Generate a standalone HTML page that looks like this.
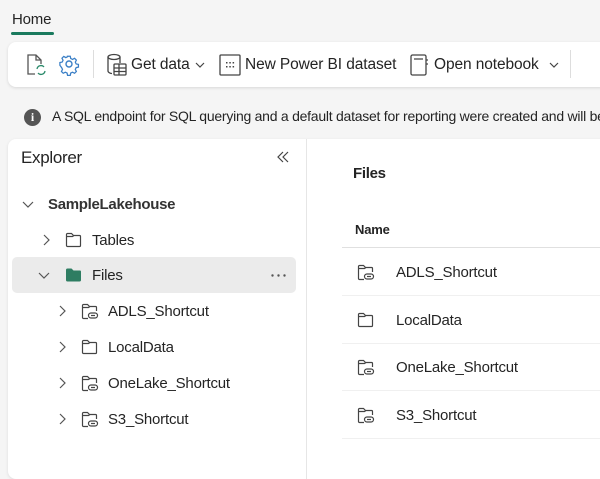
<!DOCTYPE html>
<html><head><meta charset="utf-8"><style>
*{margin:0;padding:0;box-sizing:border-box}
body{width:600px;height:472px;overflow:hidden;background:#f5f5f5;font-family:"Liberation Sans",sans-serif;color:#242424;position:relative}
.a{position:absolute;white-space:nowrap}
svg{position:absolute;overflow:visible}
.t{font-size:15px;letter-spacing:-0.2px}
.tb{font-size:15.5px;letter-spacing:-0.1px}
</style></head><body>
<div class="a t" style="left:12px;top:11px;font-size:15px">Home</div>
<div class="a" style="left:11px;top:32px;width:43px;height:3px;background:#1a7a5e;border-radius:2px"></div>

<div class="a" style="left:8px;top:42px;width:600px;height:45px;background:#fff;border-radius:8px;box-shadow:0 1px 3px rgba(0,0,0,.12)"></div>
<svg style="left:25px;top:53px" width="22" height="24" viewBox="0 0 22 24" fill="none" stroke="#555" stroke-width="1.3"><path d="M10 21H3V2h8l5 5v4M11 2v5h5"/><path d="M12 16a4 4 0 0 1 7-2M20 18a4 4 0 0 1-7 2" stroke="#2a8a6a"/></svg>
<svg style="left:59px;top:54px" width="20" height="20" viewBox="0 0 20 20" fill="none" stroke="#3a7fc6" stroke-width="1.4"><circle cx="10" cy="10" r="3"/><path d="M8.5 1.5h3l.5 2.5 2 1 2.3-1.2 2 2-1.2 2.3 1 2 2.5.5v3l-2.5.5-1 2 1.2 2.3-2 2-2.3-1.2-2 1-.5 2.5h-3l-.5-2.5-2-1-2.3 1.2-2-2 1.2-2.3-1-2L0 11.5v-3l2.5-.5 1-2L2.3 3.7l2-2L6.6 3l2-1z" transform="scale(.9) translate(1 1)"/></svg>
<div class="a" style="left:93px;top:50px;width:1px;height:28px;background:#ddd"></div>
<svg style="left:106px;top:53px" width="22" height="24" viewBox="0 0 22 24" fill="none" stroke="#444" stroke-width="1.3"><ellipse cx="8" cy="4" rx="6" ry="2.5"/><path d="M2 4v14c0 1.5 2.5 2.5 4 2.5M14 4v6"/><rect x="8" y="11" width="12" height="11" rx="1"/><path d="M8 15h12M8 18.5h12M13 11v11"/></svg>
<div class="a tb" style="left:131px;top:56px">Get data</div>
<svg style="left:195px;top:62px" width="10" height="6" viewBox="0 0 10 6" fill="none" stroke="#444" stroke-width="1.2"><path d="M1 1l4 4 4-4"/></svg>
<svg style="left:219px;top:54px" width="22" height="22" viewBox="0 0 22 22" fill="none" stroke="#444" stroke-width="1.3"><rect x="1" y="1" width="20" height="20" rx="1"/><g fill="#444" stroke="none"><rect x="7" y="8" width="1.5" height="1.5"/><rect x="10.3" y="8" width="1.5" height="1.5"/><rect x="13.6" y="8" width="1.5" height="1.5"/><rect x="7" y="12" width="1.5" height="1.5"/><rect x="10.3" y="12" width="1.5" height="1.5"/><rect x="13.6" y="12" width="1.5" height="1.5"/></g></svg>
<div class="a tb" style="left:245px;top:56px">New Power BI dataset</div>
<svg style="left:410px;top:54px" width="18" height="22" viewBox="0 0 18 22" fill="none" stroke="#444" stroke-width="1.3"><rect x="1" y="1" width="15" height="20" rx="1.5"/><path d="M4 5h9M16 6h2M16 10h2"/></svg>
<div class="a tb" style="left:434px;top:56px">Open notebook</div>
<svg style="left:549px;top:62px" width="10" height="6" viewBox="0 0 10 6" fill="none" stroke="#444" stroke-width="1.2"><path d="M1 1l4 4 4-4"/></svg>
<div class="a" style="left:570px;top:50px;width:1px;height:28px;background:#ddd"></div>

<div class="a" style="left:24px;top:109px;width:17px;height:17px;border-radius:50%;background:#555;color:#fff;font-size:12px;font-weight:bold;text-align:center;line-height:17px;font-family:'Liberation Serif',serif">i</div>
<div class="a" style="left:52px;top:108px;font-size:14px;letter-spacing:-0.25px">A SQL endpoint for SQL querying and a default dataset for reporting were created and will be</div>

<div class="a" style="left:8px;top:139px;width:610px;height:340px;background:#fff;border-radius:8px;box-shadow:0 1px 3px rgba(0,0,0,.1)"></div>
<div class="a" style="left:306px;top:139px;width:1px;height:340px;background:#e6e6e6"></div>

<div class="a" style="left:21px;top:148px;font-size:17px;letter-spacing:-0.3px">Explorer</div>
<svg style="left:277px;top:151px" width="12" height="12" viewBox="0 0 12 12" fill="none" stroke="#444" stroke-width="1.2"><path d="M6 1L1 6l5 5M11 1L6 6l5 5"/></svg>

<svg style="left:22px;top:201px" width="12" height="7" viewBox="0 0 12 7" fill="none" stroke="#555" stroke-width="1.2"><path d="M1 1l5 5 5-5"/></svg>
<div class="a" style="left:48px;top:196px;font-size:15px;font-weight:bold;letter-spacing:-0.3px;color:#333">SampleLakehouse</div>

<svg style="left:43px;top:234px" width="7" height="12" viewBox="0 0 7 12" fill="none" stroke="#555" stroke-width="1.2"><path d="M1 1l5 5-5 5"/></svg>
<svg style="left:65px;top:232px" width="17" height="15" viewBox="0 0 17 15" fill="none" stroke="#444" stroke-width="1.2"><path d="M1.5 13.5V2.5a1 1 0 0 1 1-1h4l2 2h6a1 1 0 0 1 1 1v9a1 1 0 0 1-1 1h-12a1 1 0 0 1-1-1zM1.5 4.5h6l1.5-1"/></svg>
<div class="a t" style="left:92px;top:232px">Tables</div>

<div class="a" style="left:12px;top:257px;width:284px;height:36px;background:#ebebeb;border-radius:5px"></div>
<svg style="left:38px;top:272px" width="12" height="7" viewBox="0 0 12 7" fill="none" stroke="#555" stroke-width="1.2"><path d="M1 1l5 5 5-5"/></svg>
<svg style="left:65px;top:267px" width="17" height="15" viewBox="0 0 17 15"><path d="M1 3a1.5 1.5 0 0 1 1.5-1.5h4l2 2h6.5a1 1 0 0 1 1 1V13a1.5 1.5 0 0 1-1.5 1.5h-12A1.5 1.5 0 0 1 1 13z" fill="#2e7d62"/></svg>
<div class="a t" style="left:92px;top:267px">Files</div>
<svg style="left:271px;top:274px" width="16" height="3" viewBox="0 0 16 3" fill="#555"><circle cx="1.5" cy="1.5" r="1.2"/><circle cx="7.5" cy="1.5" r="1.2"/><circle cx="13.5" cy="1.5" r="1.2"/></svg>

<svg style="left:59px;top:305px" width="7" height="12" viewBox="0 0 7 12" fill="none" stroke="#555" stroke-width="1.2"><path d="M1 1l5 5-5 5"/></svg>
<svg style="left:81px;top:303px" width="18" height="17" viewBox="0 0 18 17" fill="none" stroke="#444" stroke-width="1.2"><path d="M7 15.5H2.5a1 1 0 0 1-1-1V2.5a1 1 0 0 1 1-1h4l2 2h6a1 1 0 0 1 1 1V8M1.5 4.5h6l1.5-1"/><rect x="7.5" y="10" width="9" height="5" rx="2.5"/><path d="M10 12.5h4"/></svg>
<div class="a t" style="left:108px;top:303px">ADLS_Shortcut</div>

<svg style="left:59px;top:341px" width="7" height="12" viewBox="0 0 7 12" fill="none" stroke="#555" stroke-width="1.2"><path d="M1 1l5 5-5 5"/></svg>
<svg style="left:81px;top:339px" width="17" height="15" viewBox="0 0 17 15" fill="none" stroke="#444" stroke-width="1.2"><path d="M1.5 13.5V2.5a1 1 0 0 1 1-1h4l2 2h6a1 1 0 0 1 1 1v9a1 1 0 0 1-1 1h-12a1 1 0 0 1-1-1zM1.5 4.5h6l1.5-1"/></svg>
<div class="a t" style="left:108px;top:339px">LocalData</div>

<svg style="left:59px;top:377px" width="7" height="12" viewBox="0 0 7 12" fill="none" stroke="#555" stroke-width="1.2"><path d="M1 1l5 5-5 5"/></svg>
<svg style="left:81px;top:375px" width="18" height="17" viewBox="0 0 18 17" fill="none" stroke="#444" stroke-width="1.2"><path d="M7 15.5H2.5a1 1 0 0 1-1-1V2.5a1 1 0 0 1 1-1h4l2 2h6a1 1 0 0 1 1 1V8M1.5 4.5h6l1.5-1"/><rect x="7.5" y="10" width="9" height="5" rx="2.5"/><path d="M10 12.5h4"/></svg>
<div class="a t" style="left:108px;top:375px">OneLake_Shortcut</div>

<svg style="left:59px;top:413px" width="7" height="12" viewBox="0 0 7 12" fill="none" stroke="#555" stroke-width="1.2"><path d="M1 1l5 5-5 5"/></svg>
<svg style="left:81px;top:411px" width="18" height="17" viewBox="0 0 18 17" fill="none" stroke="#444" stroke-width="1.2"><path d="M7 15.5H2.5a1 1 0 0 1-1-1V2.5a1 1 0 0 1 1-1h4l2 2h6a1 1 0 0 1 1 1V8M1.5 4.5h6l1.5-1"/><rect x="7.5" y="10" width="9" height="5" rx="2.5"/><path d="M10 12.5h4"/></svg>
<div class="a t" style="left:108px;top:411px">S3_Shortcut</div>

<div class="a" style="left:353px;top:165px;font-size:15px;font-weight:bold;letter-spacing:-0.3px">Files</div>
<div class="a" style="left:355px;top:222px;font-size:13px;font-weight:bold;letter-spacing:-0.2px">Name</div>
<div class="a" style="left:342px;top:247px;width:260px;height:1px;background:#e0e0e0"></div>

<svg style="left:357px;top:264px" width="18" height="17" viewBox="0 0 18 17" fill="none" stroke="#444" stroke-width="1.2"><path d="M7 15.5H2.5a1 1 0 0 1-1-1V2.5a1 1 0 0 1 1-1h4l2 2h6a1 1 0 0 1 1 1V8M1.5 4.5h6l1.5-1"/><rect x="7.5" y="10" width="9" height="5" rx="2.5"/><path d="M10 12.5h4"/></svg>
<div class="a t" style="left:396px;top:264px">ADLS_Shortcut</div>
<div class="a" style="left:342px;top:295px;width:260px;height:1px;background:#f0f0f0"></div>

<svg style="left:357px;top:312px" width="17" height="15" viewBox="0 0 17 15" fill="none" stroke="#444" stroke-width="1.2"><path d="M1.5 13.5V2.5a1 1 0 0 1 1-1h4l2 2h6a1 1 0 0 1 1 1v9a1 1 0 0 1-1 1h-12a1 1 0 0 1-1-1zM1.5 4.5h6l1.5-1"/></svg>
<div class="a t" style="left:396px;top:312px">LocalData</div>
<div class="a" style="left:342px;top:343px;width:260px;height:1px;background:#f0f0f0"></div>

<svg style="left:357px;top:359px" width="18" height="17" viewBox="0 0 18 17" fill="none" stroke="#444" stroke-width="1.2"><path d="M7 15.5H2.5a1 1 0 0 1-1-1V2.5a1 1 0 0 1 1-1h4l2 2h6a1 1 0 0 1 1 1V8M1.5 4.5h6l1.5-1"/><rect x="7.5" y="10" width="9" height="5" rx="2.5"/><path d="M10 12.5h4"/></svg>
<div class="a t" style="left:396px;top:359px">OneLake_Shortcut</div>
<div class="a" style="left:342px;top:390px;width:260px;height:1px;background:#f0f0f0"></div>

<svg style="left:357px;top:407px" width="18" height="17" viewBox="0 0 18 17" fill="none" stroke="#444" stroke-width="1.2"><path d="M7 15.5H2.5a1 1 0 0 1-1-1V2.5a1 1 0 0 1 1-1h4l2 2h6a1 1 0 0 1 1 1V8M1.5 4.5h6l1.5-1"/><rect x="7.5" y="10" width="9" height="5" rx="2.5"/><path d="M10 12.5h4"/></svg>
<div class="a t" style="left:396px;top:407px">S3_Shortcut</div>
<div class="a" style="left:342px;top:438px;width:260px;height:1px;background:#f0f0f0"></div>
</body></html>
